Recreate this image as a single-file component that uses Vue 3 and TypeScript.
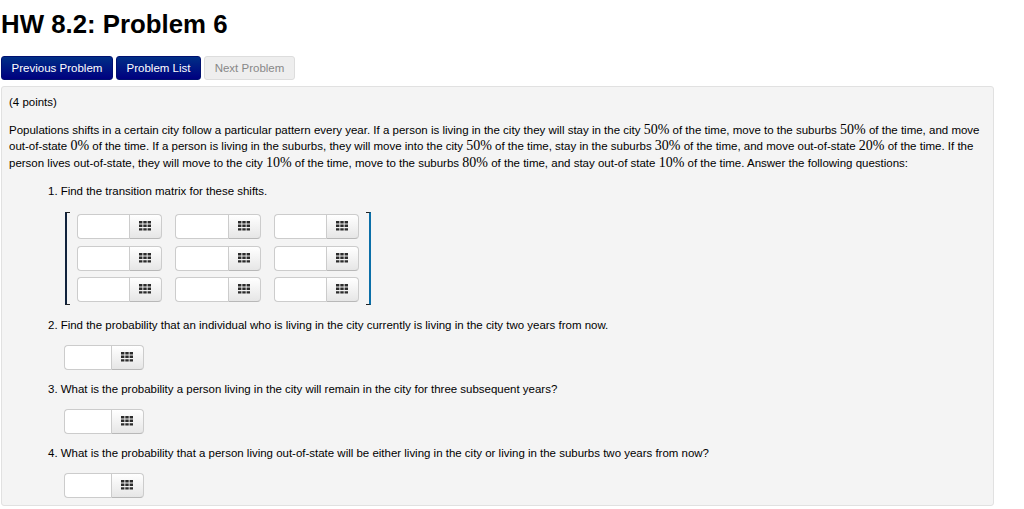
<script setup lang="ts">
interface Segment {
  text: string
  math?: boolean
}

const t = (text: string): Segment => ({ text })
const m = (text: string): Segment => ({ text, math: true })

const lines: Segment[][] = [
  [
    t('Populations shifts in a certain city follow a particular pattern every year. If a person is living in the city they will stay in the city '),
    m('50%'), t(' of the time, move to the suburbs '), m('50%'), t(' of the time, and move'),
  ],
  [
    t('out-of-state '), m('0%'),
    t(' of the time. If a person is living in the suburbs, they will move into the city '), m('50%'),
    t(' of the time, stay in the suburbs '), m('30%'),
    t(' of the time, and move out-of-state '), m('20%'), t(' of the time. If the'),
  ],
  [
    t('person lives out-of-state, they will move to the city '), m('10%'),
    t(' of the time, move to the suburbs '), m('80%'),
    t(' of the time, and stay out-of state '), m('10%'),
    t(' of the time. Answer the following questions:'),
  ],
]

const questions: string[] = [
  'Find the probability that an individual who is living in the city currently is living in the city two years from now.',
  'What is the probability a person living in the city will remain in the city for three subsequent years?',
  'What is the probability that a person living out-of-state will be either living in the city or living in the suburbs two years from now?',
]
</script>

<template>
  <main class="page">
    <h1>HW 8.2: Problem 6</h1>
    <nav class="nav">
      <button class="btn prev">Previous Problem</button>
      <button class="btn list">Problem List</button>
      <button class="btn next" disabled>Next Problem</button>
    </nav>
    <section class="well">
      <p class="points">(4 points)</p>
      <div class="intro">
        <div v-for="(line, i) in lines" :key="i" class="line">
          <span v-for="(s, j) in line" :key="j" :class="{ math: s.math }">{{ s.text }}</span>
        </div>
      </div>
      <div class="question"><span class="num">1.</span>Find the transition matrix for these shifts.</div>
      <div class="matrix">
        <div v-for="n in 9" :key="n" class="answer cell">
          <input type="text" />
          <button class="pad">
            <svg width="12" height="10" viewBox="0 0 12 10">
              <path d="M0 0h3.4v2.4H0zM4.3 0h3.4v2.4H4.3zM8.6 0H12v2.4H8.6zM0 3.6h3.4v2.4H0zM4.3 3.6h3.4v2.4H4.3zM8.6 3.6H12v2.4H8.6zM0 7.2h3.4v2.4H0zM4.3 7.2h3.4v2.4H4.3zM8.6 7.2H12v2.4H8.6z" />
            </svg>
          </button>
        </div>
      </div>
      <template v-for="(q, i) in questions" :key="q">
        <div class="question"><span class="num">{{ i + 2 }}.</span>{{ q }}</div>
        <div class="answer single">
          <input type="text" />
          <button class="pad">
            <svg width="12" height="10" viewBox="0 0 12 10">
              <path d="M0 0h3.4v2.4H0zM4.3 0h3.4v2.4H4.3zM8.6 0H12v2.4H8.6zM0 3.6h3.4v2.4H0zM4.3 3.6h3.4v2.4H4.3zM8.6 3.6H12v2.4H8.6zM0 7.2h3.4v2.4H0zM4.3 7.2h3.4v2.4H4.3zM8.6 7.2H12v2.4H8.6z" />
            </svg>
          </button>
        </div>
      </template>
    </section>
  </main>
</template>

<style>
body {
  background: #fff;
  overflow: hidden;
}
</style>

<style scoped>
.page {
  box-sizing: border-box;
  height: 509px;
  padding: 8px 0 0 1px;
  font-family: 'Liberation Sans', Arial, sans-serif;
  font-size: 11.48px;
  line-height: 16px;
  color: #000;
}
h1 {
  margin: 0;
  height: 48px;
  font-size: 25.8px;
  line-height: 33px;
  color: #000;
  white-space: nowrap;
}
.nav {
  display: flex;
  gap: 3px;
}
.btn {
  box-sizing: border-box;
  height: 24px;
  margin: 0;
  padding: 0;
  border: 1px solid #001070;
  border-radius: 3px;
  background: linear-gradient(#002f86, #000080);
  color: #fff;
  font: 11.5px/22px 'Liberation Sans', Arial, sans-serif;
  text-align: center;
  white-space: nowrap;
}
.prev { width: 112px; }
.list { width: 85px; }
.next {
  width: 91px;
  background: #eee;
  border-color: #ddd;
  color: #888;
}
.well {
  box-sizing: border-box;
  width: 993px;
  height: 420px;
  margin-top: 6px;
  padding: 7px 7px 0;
  border: 1px solid #e1e1e1;
  border-radius: 3px;
  background: #f4f4f4;
}
.points {
  margin: 0 0 12px;
}
.intro {
  margin-bottom: 12px;
}
.line {
  height: 16.4px;
  font-size: 11.5px;
  line-height: 16.4px;
  white-space: pre;
}
.math {
  display: inline-block;
  font-family: 'Liberation Serif', serif;
  font-size: 14px;
  letter-spacing: 0;
  line-height: 14px;
}
.question {
  padding-left: 39px;
  white-space: nowrap;
}
.num {
  display: inline-block;
  width: 12.7px;
}
.answer {
  display: flex;
  box-sizing: border-box;
  height: 25px;
}
.answer input {
  box-sizing: border-box;
  flex: 1;
  min-width: 0;
  margin: 0;
  padding: 0 4px;
  border: 1px solid #ccc;
  border-right: 0;
  border-radius: 4px 0 0 4px;
  background: #fff;
}
.pad {
  display: flex;
  box-sizing: border-box;
  width: 33px;
  margin: 0;
  padding: 0 1px 1px 0;
  align-items: center;
  justify-content: center;
  border: 1px solid #ccc;
  border-bottom-color: #b8b8b8;
  border-radius: 0 4px 4px 0;
  background: linear-gradient(#fff, #e6e6e6);
}
.pad svg {
  fill: #2b2b2b;
}
.matrix {
  position: relative;
  display: grid;
  box-sizing: border-box;
  width: 306px;
  height: 93px;
  margin: 13px 0 12px 56px;
  padding: 2px 12px 0 12px;
  grid-template-columns: repeat(3, 85.3px);
  grid-auto-rows: 25px;
  column-gap: 13px;
  row-gap: 6.4px;
}
.matrix::before,
.matrix::after {
  content: '';
  position: absolute;
  top: 0;
  bottom: 0;
  box-sizing: border-box;
  width: 5px;
  border: 1px solid #222;
}
.matrix::before {
  left: 0;
  border-left: 2px solid #10223c;
  border-right: 0;
}
.matrix::after {
  right: 0;
  border-right: 2px solid #0b6fa8;
  border-left: 0;
}
.single {
  width: 80px;
  margin: 12px 0 11px 55px;
}
</style>
